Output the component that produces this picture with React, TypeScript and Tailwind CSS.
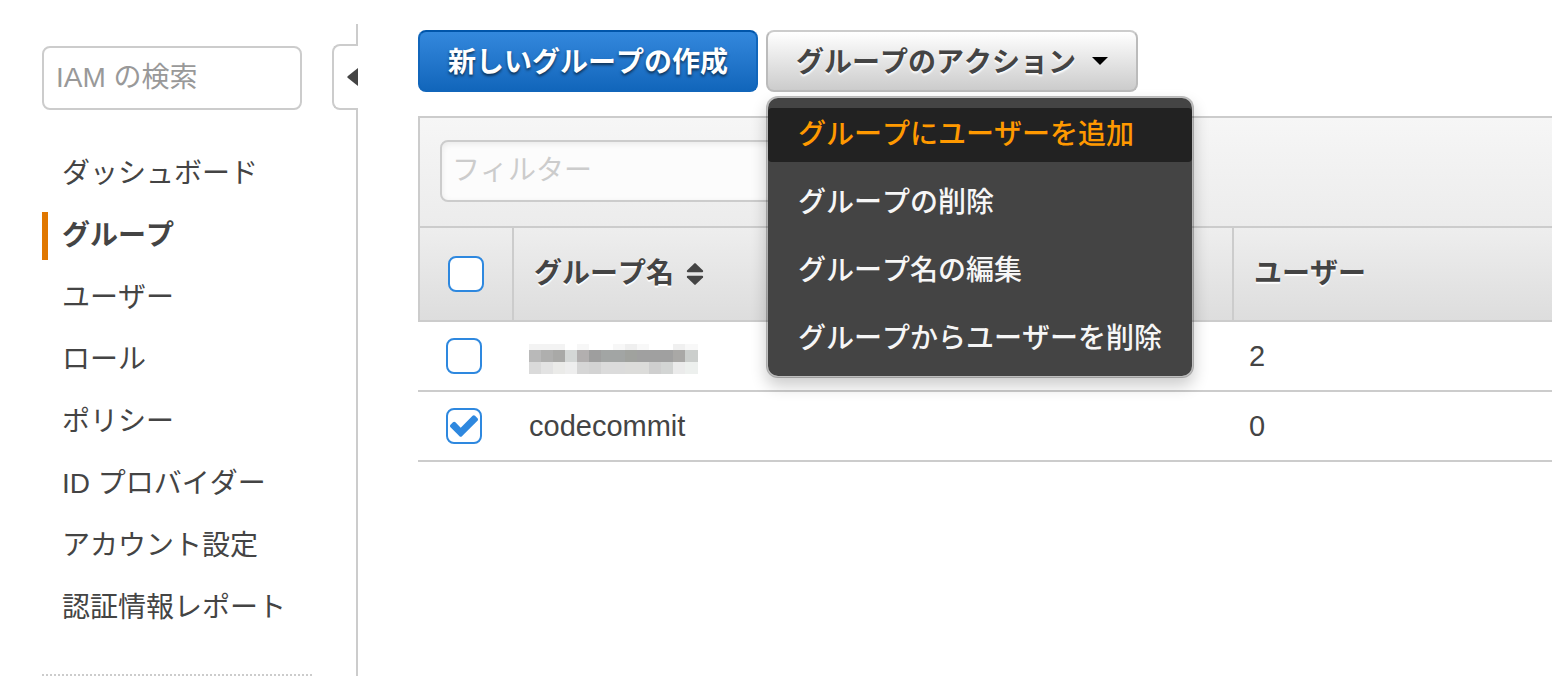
import { useState } from "react";

const navItems = [
  "ダッシュボード",
  "グループ",
  "ユーザー",
  "ロール",
  "ポリシー",
  "ID プロバイダー",
  "アカウント設定",
  "認証情報レポート",
];

const actions = [
  "グループにユーザーを追加",
  "グループの削除",
  "グループ名の編集",
  "グループからユーザーを削除",
];

// Mosaic tiles hiding a private group name: [x, y, width, height, fill]
const tiles: [number, number, number, number, string][] = [
  [0, 0, 36, 6, "#f3f3f3"],
  [48, 0, 12, 6, "#f7f7f7"],
  [84, 0, 12, 6, "#f7f7f7"],
  [96, 0, 12, 6, "#efefef"],
  [108, 0, 12, 6, "#f8f8f8"],
  [144, 0, 12, 6, "#f0f0f0"],
  [156, 0, 13, 6, "#f8f8f8"],
  [0, 6, 12, 12, "#b9b9b9"],
  [12, 6, 12, 12, "#afafae"],
  [24, 6, 12, 12, "#a9a9a7"],
  [36, 6, 12, 12, "#d4d7d6"],
  [48, 6, 12, 12, "#b2afaf"],
  [60, 6, 12, 12, "#9e9e9e"],
  [72, 6, 24, 12, "#a2a5a4"],
  [96, 6, 12, 12, "#a0a29e"],
  [108, 6, 36, 12, "#a0a0a0"],
  [144, 6, 12, 12, "#a9a8a6"],
  [156, 6, 13, 12, "#cbcecc"],
  [0, 18, 12, 12, "#dadada"],
  [12, 18, 12, 12, "#e3e3e3"],
  [24, 18, 12, 12, "#ebebe9"],
  [36, 18, 12, 12, "#eeeeee"],
  [48, 18, 12, 12, "#d6d6d6"],
  [60, 18, 12, 12, "#d3d3d3"],
  [72, 18, 24, 12, "#dbdbdb"],
  [96, 18, 24, 12, "#dcdcda"],
  [120, 18, 12, 12, "#cfcfcf"],
  [132, 18, 12, 12, "#d3d5d4"],
  [144, 18, 12, 12, "#ebebeb"],
  [156, 18, 13, 12, "#edf0ee"],
];

function Tick({ label, initial = false }: { label: string; initial?: boolean }) {
  const [on, setOn] = useState(initial);
  return (
    <label className="relative block size-9">
      <input
        type="checkbox"
        aria-label={label}
        checked={on}
        onChange={() => setOn(!on)}
        className="block size-9 appearance-none rounded-lg border-2 border-[#2e88df] bg-white"
      />
      {on && (
        <svg
          viewBox="121 334 1550 1188"
          fill="#2e88df"
          className="pointer-events-none absolute inset-1 size-7"
        >
          <path d="M1671 566q0 40-28 68l-724 724-136 136q-28 28-68 28t-68-28l-136-136-362-362q-28-28-28-68t28-68l136-136q28-28 68-28t68 28l294 295 656-657q28-28 68-28t68 28l136 136q28 28 28 68z" />
        </svg>
      )}
    </label>
  );
}

function Sidebar() {
  return (
    <aside className="flex w-[358px] shrink-0 justify-between pt-6 pl-[42px]">
      <div className="w-[270px] pt-[22px]">
        <input
          type="search"
          aria-label="IAM の検索"
          placeholder="IAM の検索"
          className="block h-16 w-[260px] rounded-lg border-2 border-[#ccc] bg-white px-3 placeholder:text-[#999]"
        />
        <nav className="mt-10 flex flex-col gap-[14px] border-b-2 border-dotted border-[#ccc] pb-[42px]">
          {navItems.map((item) => (
            <a
              key={item}
              href="#"
              className={
                item === "グループ"
                  ? "flex h-12 items-center border-l-6 border-[#e07700] pl-[14px] font-bold whitespace-nowrap"
                  : "flex h-12 items-center border-l-6 border-transparent pl-[14px] whitespace-nowrap"
              }
            >
              {item}
            </a>
          ))}
        </nav>
      </div>
      <div className="flex w-[26px] flex-col">
        <div className="h-5 border-r-2 border-[#ccc]" />
        <button
          type="button"
          aria-label="サイドバーを閉じる"
          className="flex h-[66px] items-center justify-end rounded-l-lg border-y-2 border-l-2 border-[#ccc]"
        >
          <svg width="11" height="18" viewBox="0 0 11 18" fill="#444">
            <path d="M11 0v18L0.6 9.8Q0 9 0.6 8.2Z" />
          </svg>
        </button>
        <div className="flex-1 border-r-2 border-[#ccc]" />
      </div>
    </aside>
  );
}

function ActionMenu() {
  return (
    <div className="relative">
      <button
        type="button"
        aria-haspopup="menu"
        aria-expanded="true"
        className="flex h-[62px] items-center gap-4 rounded-lg border-2 border-[#bbb] border-t-[#ccc] bg-linear-to-b from-white to-[#ccc] px-7 font-bold whitespace-nowrap [text-shadow:0_2px_2px_#fff]"
      >
        <span className="pt-1">グループのアクション</span>
        <svg width="16" height="8" viewBox="0 0 16 8" fill="#000">
          <path d="M0 0H16L8 8Z" />
        </svg>
      </button>
      <ul
        role="menu"
        className="absolute top-[66px] left-0 z-10 flex flex-col gap-[14px] rounded-xl border-2 border-black/25 bg-[#444] bg-clip-padding py-[10px] font-medium whitespace-nowrap shadow-[0_8px_16px_rgba(0,0,0,0.2)]"
      >
        {actions.map((action, i) => (
          <li key={action} role="none">
            <button
              type="button"
              role="menuitem"
              className={
                i === 0
                  ? "flex h-[54px] w-full items-center rounded-sm bg-[#222] px-[30px] text-[#ff9900]"
                  : "flex h-[54px] w-full items-center px-[30px] text-[#f6f6f6]"
              }
            >
              {action}
            </button>
          </li>
        ))}
      </ul>
    </div>
  );
}

export default function App() {
  return (
    <div
      lang="ja"
      className="flex min-h-screen overflow-x-hidden bg-white font-['Liberation_Sans','Noto_Sans_CJK_JP',sans-serif] text-[28px] leading-10 text-[#444] [font-kerning:none]"
    >
      <Sidebar />
      <main className="min-w-0 flex-1 pt-[30px] pl-[60px]">
        <div className="flex gap-2">
          <button
            type="button"
            className="h-[62px] rounded-lg border-2 border-[#1166bb] border-t-[#0055aa] bg-linear-to-b from-[#3388dd] to-[#1166bb] px-7 pt-1 font-bold whitespace-nowrap text-white [text-shadow:0_2px_3px_rgba(0,0,0,0.6)]"
          >
            新しいグループの作成
          </button>
          <ActionMenu />
        </div>

        <div className="mt-6 border-t-2 border-l-2 border-[#ccc] bg-linear-to-b from-[#f6f6f6] to-[#ececec] px-5 pt-[22px] pb-6">
          <input
            type="text"
            aria-label="フィルター"
            placeholder="フィルター"
            className="block h-[62px] w-[480px] max-w-full rounded-lg border-2 border-[#ccc] bg-[#fcfcfc] px-[10px] shadow-[inset_0_2px_6px_rgba(0,0,0,0.08)] placeholder:text-[#ccc]"
          />
        </div>

        <table className="w-full table-fixed border-separate border-spacing-0 text-left">
          <colgroup>
            <col className="w-[94px]" />
            <col className="w-[720px]" />
            <col />
          </colgroup>
          <thead>
            <tr className="h-24 [&>th]:border-y-2 [&>th]:border-l-2 [&>th]:border-[#ccc] [&>th]:bg-linear-to-b [&>th]:from-[#eee] [&>th]:to-[#ddd] [&>th]:[text-shadow:0_2px_1px_#fff]">
              <th scope="col" className="pl-7">
                <Tick label="すべて選択" />
              </th>
              <th scope="col" className="pl-5">
                <span className="flex items-center gap-3">
                  グループ名
                  <svg width="18" height="22" viewBox="0 0 18 22" fill="#444">
                    <path d="M8.3 0.4Q9 -0.2 9.7 0.4L17 7.6Q17.6 9.2 16 9.2H2Q0.4 9.2 1 7.6Z" />
                    <path d="M8.3 21.6Q9 22.2 9.7 21.6L17 14.4Q17.6 12.8 16 12.8H2Q0.4 12.8 1 14.4Z" />
                  </svg>
                </span>
              </th>
              <th scope="col" className="pl-5">
                ユーザー
              </th>
            </tr>
          </thead>
          <tbody className="text-[29px] [&_td]:h-[70px] [&_td]:border-b-2 [&_td]:border-[#ccc]">
            <tr>
              <td className="pl-7">
                <Tick label="グループを選択" />
              </td>
              <td className="pl-[17px]">
                <svg
                  width="170"
                  height="36"
                  viewBox="0 -6 170 36"
                  shapeRendering="crispEdges"
                  role="img"
                  aria-label="非表示のグループ名"
                  className="block"
                >
                  {tiles.map(([x, y, w, h, fill]) => (
                    <rect key={`${x}-${y}`} x={x} y={y} width={w} height={h} fill={fill} />
                  ))}
                </svg>
              </td>
              <td className="pl-[17px]">2</td>
            </tr>
            <tr>
              <td className="pl-7">
                <Tick label="codecommit を選択" initial />
              </td>
              <td className="pl-[17px]">codecommit</td>
              <td className="pl-[17px]">0</td>
            </tr>
          </tbody>
        </table>
      </main>
    </div>
  );
}
